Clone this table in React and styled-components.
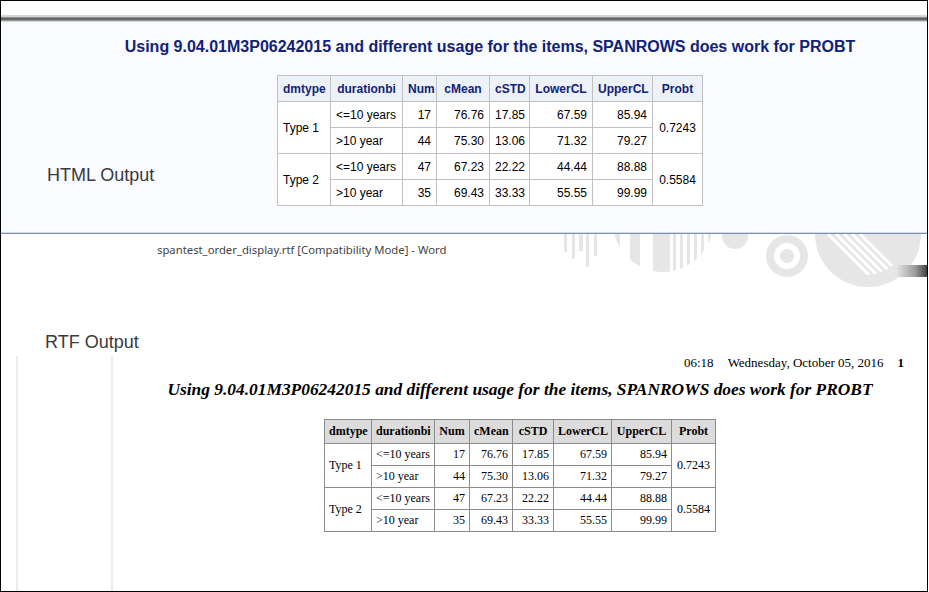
import React from 'react';
import styled, { createGlobalStyle } from 'styled-components';

const GlobalStyle = createGlobalStyle`
  html, body {
    margin: 0;
    padding: 0;
    background: #ffffff;
  }
`;

const Frame = styled.div`
  width: 928px;
  height: 592px;
  box-sizing: border-box;
  border: 1px solid #000;
  background: #fff;
  overflow: hidden;
  display: flex;
  flex-direction: column;
`;

const TopStrip = styled.div`
  height: 14px;
  background: #fff;
`;

const Bevel = styled.div`
  height: 7px;
  background: linear-gradient(
    to bottom,
    #d6d6d6 0px, #d6d6d6 2px,
    #8c8c8c 2px, #8c8c8c 3px,
    #666 3px, #666 5px,
    #9c9c9c 5px, #9c9c9c 6px,
    #d0d0d0 6px
  );
`;

const HtmlPanel = styled.div`
  height: 211px;
  box-sizing: border-box;
  background: #fafbfe;
  padding-top: 16px;
  border-bottom: 1px solid #d8dbe2;
  font-family: "Liberation Sans", Arial, sans-serif;
`;

const HtmlTitle = styled.div`
  padding-left: 52px;
  text-align: center;
  font-size: 16px;
  line-height: 18px;
  font-weight: bold;
  color: #112277;
  white-space: nowrap;
`;

const HtmlBody = styled.div`
  margin-top: 19px;
  display: grid;
  grid-template-columns: 276px auto 1fr;
`;

const SideLabel = styled.div`
  align-self: end;
  padding-left: 46px;
  margin-bottom: 20px;
  font-size: 18px;
  line-height: 21px;
  color: #3a3a3a;
  font-family: "Liberation Sans", Arial, sans-serif;
`;

const HtmlTable = styled.table`
  width: 425px;
  border-collapse: collapse;
  table-layout: fixed;
  font-size: 12px;
  color: #000;
  background: #fff;

  th, td {
    border: 1px solid #c1c1c1;
    height: 26px;
    padding: 0 5px;
    box-sizing: border-box;
    white-space: nowrap;
    overflow: visible;
  }
  th {
    background: #edf2f9;
    color: #112277;
    font-weight: bold;
    text-align: center;
  }
`;

const Cell = styled.td`
  text-align: ${p => p.$align || 'right'};
`;

const WordBar = styled.div`
  height: 65px;
  border-top: 1px solid #7390bd;
  display: flex;
  align-items: flex-start;
`;

const Caption = styled.div`
  padding: 8px 0 0 156px;
  font-family: "Noto Sans", "Open Sans", sans-serif;
  font-size: 11.3px;
  line-height: 16px;
  color: #444;
  white-space: nowrap;
`;

const ArtBox = styled.svg`
  margin-left: auto;
  display: block;
  flex: none;
`;

const RtfLabel = styled.div`
  margin-top: 33px;
  padding-left: 44px;
  font-family: "Liberation Sans", Arial, sans-serif;
  font-size: 18px;
  line-height: 21px;
  color: #3a3a3a;
`;

const DocRow = styled.div`
  margin-top: 3px;
  flex: 1;
  display: flex;
`;

const NavPane = styled.div`
  margin-left: 15px;
  width: 93px;
  border-left: 2px solid #ececec;
  border-right: 2px solid #ececec;
`;

const Page = styled.div`
  flex: 1;
  font-family: "Liberation Serif", "Times New Roman", serif;
  color: #000;
`;

const DateLine = styled.div`
  text-align: right;
  padding-right: 23px;
  font-size: 13px;
  line-height: 14px;

  span + span {
    margin-left: 14px;
  }
  b {
    font-weight: bold;
  }
`;

const RtfTitle = styled.div`
  margin-top: 9px;
  text-align: center;
  font-size: 17.4px;
  line-height: 20px;
  font-weight: bold;
  font-style: italic;
  white-space: nowrap;
`;

const RtfTable = styled.table`
  width: 391px;
  margin: 20px auto 0;
  border-collapse: collapse;
  table-layout: fixed;
  font-size: 12px;
  border: 1px solid #6f6f6f;

  th, td {
    border: 1px solid #8c8c8c;
    height: 22px;
    padding: 0 4px;
    box-sizing: border-box;
    white-space: nowrap;
  }
  th {
    height: 24px;
    background: #dcdcdc;
    font-weight: bold;
    text-align: center;
  }
`;

const htmlCols = [53, 72, 34, 53, 40, 63, 60, 50];
const rtfCols = [47, 63, 35, 43, 41, 58, 60, 44];
const heads = ['dmtype', 'durationbi', 'Num', 'cMean', 'cSTD', 'LowerCL', 'UpperCL', 'Probt'];

const groups = [
  {
    type: 'Type 1',
    probt: '0.7243',
    rows: [
      ['<=10 years', '17', '76.76', '17.85', '67.59', '85.94'],
      ['>10 year', '44', '75.30', '13.06', '71.32', '79.27'],
    ],
  },
  {
    type: 'Type 2',
    probt: '0.5584',
    rows: [
      ['<=10 years', '47', '67.23', '22.22', '44.44', '88.88'],
      ['>10 year', '35', '69.43', '33.33', '55.55', '99.99'],
    ],
  },
];

const TableContent = ({ cols }) => (
  <>
    <colgroup>
      {cols.map((w, i) => <col key={i} style={{ width: w }} />)}
    </colgroup>
    <thead>
      <tr>
        {heads.map(h => <th key={h}>{h}</th>)}
      </tr>
    </thead>
    <tbody>
      {groups.map(g =>
        g.rows.map((r, i) => (
          <tr key={g.type + i}>
            {i === 0 && <Cell $align="left" rowSpan={2}>{g.type}</Cell>}
            <Cell $align="left">{r[0]}</Cell>
            {r.slice(1).map((v, j) => <Cell key={j}>{v}</Cell>)}
            {i === 0 && <Cell $align="center" rowSpan={2}>{g.probt}</Cell>}
          </tr>
        ))
      )}
    </tbody>
  </>
);

// Word backstage artwork behind the title bar
const WordArt = () => (
  <ArtBox width="367" height="65" viewBox="0 0 367 65">
    <defs>
      <clipPath id="halfDisk">
        <circle cx="103" cy="-12" r="50" />
      </clipPath>
      <clipPath id="bigInner">
        <circle cx="306" cy="-2" r="43" />
      </clipPath>
      <linearGradient id="smudge" x1="0" x2="1" y1="0" y2="0">
        <stop offset="0" stopColor="#e2e2e2" />
        <stop offset="0.6" stopColor="#9a9a9a" />
        <stop offset="1" stopColor="#3a3a3a" />
      </linearGradient>
    </defs>
    <g fill="#e6e6e6">
      <rect x="4" y="0" width="3" height="18" />
      <rect x="12" y="0" width="3" height="25" />
      <rect x="19" y="0" width="4" height="17" />
      <rect x="26" y="0" width="3" height="33" />
      <rect x="34" y="0" width="3" height="22" />
      <g clipPath="url(#halfDisk)">
        <rect x="53" y="0" width="7" height="40" />
        <rect x="70" y="0" width="10" height="40" />
        <rect x="93" y="0" width="17" height="40" />
        <rect x="113" y="0" width="3" height="40" />
        <rect x="120" y="0" width="3" height="40" />
        <rect x="127" y="0" width="3" height="40" />
        <rect x="134" y="0" width="3" height="40" />
        <rect x="141" y="0" width="3" height="40" />
        <rect x="148" y="0" width="3" height="40" />
      </g>
      <circle cx="175" cy="2" r="13" />
      <circle cx="227" cy="22" r="17" fill="none" stroke="#e6e6e6" strokeWidth="8" />
      <circle cx="227" cy="22" r="7" />
      <circle cx="308" cy="0" r="53" />
    </g>
    <g clipPath="url(#bigInner)" stroke="#fff" strokeWidth="3">
      <line x1="268" y1="0" x2="318" y2="50" />
      <line x1="276" y1="0" x2="326" y2="50" />
      <line x1="284" y1="0" x2="334" y2="50" />
      <line x1="292" y1="0" x2="342" y2="50" />
      <line x1="300" y1="0" x2="350" y2="50" />
    </g>
    <rect x="337" y="31" width="31" height="12" fill="url(#smudge)" />
  </ArtBox>
);

const App = () => (
  <>
    <GlobalStyle />
    <Frame>
      <TopStrip />
      <Bevel />
      <HtmlPanel>
        <HtmlTitle>
          Using 9.04.01M3P06242015 and different usage for the items, SPANROWS does work for PROBT
        </HtmlTitle>
        <HtmlBody>
          <SideLabel>HTML Output</SideLabel>
          <HtmlTable>
            <TableContent cols={htmlCols} />
          </HtmlTable>
        </HtmlBody>
      </HtmlPanel>
      <WordBar>
        <Caption>spantest_order_display.rtf [Compatibility Mode] - Word</Caption>
        <WordArt />
      </WordBar>
      <RtfLabel>RTF Output</RtfLabel>
      <DocRow>
        <NavPane />
        <Page>
          <DateLine>
            <span>06:18</span>
            <span>Wednesday, October 05, 2016</span>
            <span><b>1</b></span>
          </DateLine>
          <RtfTitle>
            Using 9.04.01M3P06242015 and different usage for the items, SPANROWS does work for PROBT
          </RtfTitle>
          <RtfTable>
            <TableContent cols={rtfCols} />
          </RtfTable>
        </Page>
      </DocRow>
    </Frame>
  </>
);

export default App;
